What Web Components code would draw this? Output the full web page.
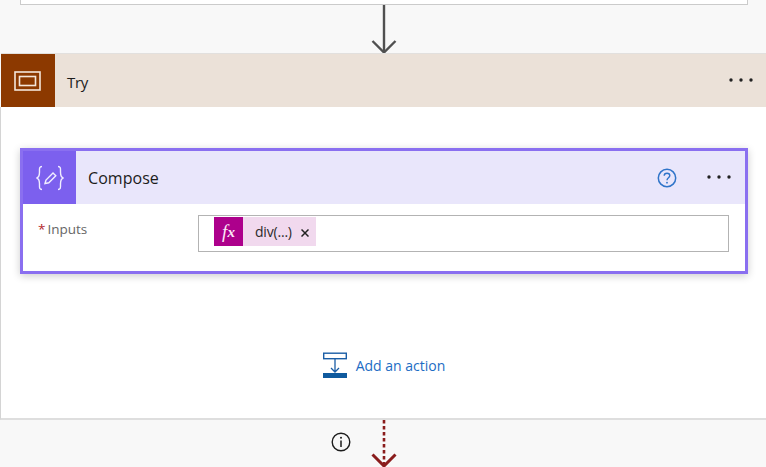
<!DOCTYPE html>
<html>
<head>
<meta charset="utf-8">
<title>Try scope</title>
<style>
    html, body {
        margin: 0;
        height: 467px;
        overflow: hidden;
        background: #f8f8f8;
        font-family: "Open Sans", "Noto Sans", "Liberation Sans", sans-serif;
    }
</style>
</head>
<body>
<flow-canvas>
    <prev-card></prev-card>
    <flow-arrow></flow-arrow>
    <scope-block label="Try">
        <action-card label="Compose">
            <input-row label="Inputs">
                <token-chip label="div(...)"></token-chip>
            </input-row>
        </action-card>
        <add-action label="Add an action"></add-action>
    </scope-block>
    <flow-footer></flow-footer>
</flow-canvas>

<script>
// three dots used in both headers
const DOTS = `<svg width="26" height="6" viewBox="0 0 26 6"><circle cx="3" cy="3" r="1.7" fill="#222"/><circle cx="13" cy="3" r="1.7" fill="#222"/><circle cx="23" cy="3" r="1.7" fill="#222"/></svg>`;

class FlowCanvas extends HTMLElement {
    constructor() {
        super();
        this.attachShadow({ mode: 'open' });
        this.shadowRoot.innerHTML = `
            <style>
                :host { display: flex; flex-direction: column; width: 766px; height: 467px; overflow: hidden; }
            </style>
            <slot></slot>
        `;
    }
}

class PrevCard extends HTMLElement {
    constructor() {
        super();
        this.attachShadow({ mode: 'open' });
        this.shadowRoot.innerHTML = `
            <style>
                :host {
                    display: block;
                    height: 4px;
                    margin: 0 18px 0 20px;
                    background: #fff;
                    border: 1px solid #cbcbcb;
                    border-top: 0;
                }
            </style>
        `;
    }
}

class FlowArrow extends HTMLElement {
    constructor() {
        super();
        this.attachShadow({ mode: 'open' });
        this.shadowRoot.innerHTML = `
            <style>
                :host { display: flex; justify-content: center; height: 48px; padding-left: 2px; }
                svg { display: block; }
            </style>
            <svg width="26" height="48" viewBox="0 0 26 48" fill="none" stroke="#505050" stroke-width="2.400">
                <path d="M13 0V47"/>
                <path d="M1.500 36L13 47.500L24.500 36"/>
            </svg>
        `;
    }
}

class ScopeBlock extends HTMLElement {
    constructor() {
        super();
        this.attachShadow({ mode: 'open' });
        this.shadowRoot.innerHTML = `
            <style>
                :host { display: block; }
                #head {
                    display: flex;
                    align-items: center;
                    height: 53px;
                    margin-left: 1px;
                    background: #ebe1d8;
                    border-top: 1px solid #e2e0de;
                    color: #1c1c1c;
                }
                #icon {
                    display: flex;
                    align-items: center;
                    justify-content: center;
                    width: 54px;
                    height: 53px;
                    background: #8c3900;
                }
                #title { flex: 1; margin-left: 12px; margin-top: 2px; font-size: 15px; letter-spacing: -0.3px; }
                #more { display: flex; margin-right: 12px; margin-top: -2px; }
                #body {
                    height: 313px;
                    box-sizing: border-box;
                    background: #fff;
                    border-left: 1px solid #d4d4d4;
                    border-bottom: 2px solid #dedede;
                    display: flex;
                    flex-direction: column;
                    padding: 41px 18px 0 19px;
                }
            </style>
            <div id="head">
                <div id="icon">
                    <svg width="28" height="20" viewBox="0 0 28 20" fill="none" stroke="#f4e6da" stroke-width="1.600">
                        <rect x="1" y="1" width="25" height="18"/>
                        <rect x="5.500" y="5.500" width="16" height="9"/>
                    </svg>
                </div>
                <div id="title"></div>
                <div id="more">${DOTS}</div>
            </div>
            <div id="body"><slot></slot></div>
        `;
        this.shadowRoot.getElementById('title').textContent = this.getAttribute('label');
    }
}

class ActionCard extends HTMLElement {
    constructor() {
        super();
        this.attachShadow({ mode: 'open' });
        this.shadowRoot.innerHTML = `
            <style>
                :host {
                    display: block;
                    height: 126px;
                    box-sizing: border-box;
                    border: 3px solid #8a6ff0;
                    background: #fff;
                    box-shadow: 0 2px 8px rgba(0, 0, 0, 0.2);
                }
                #head {
                    display: flex;
                    align-items: center;
                    height: 53px;
                    background: #e9e6fb;
                    color: #1c1c1c;
                }
                #icon {
                    display: flex;
                    align-items: center;
                    justify-content: center;
                    width: 53px;
                    height: 53px;
                    background: #7c60ee;
                }
                #title { flex: 1; margin-left: 12px; font-size: 16px; letter-spacing: 0.05px; }
                #help { display: block; margin-right: 29px; }
                #more { display: flex; margin-right: 13px; margin-top: -2px; }
            </style>
            <div id="head">
                <div id="icon">
                    <svg width="30" height="26" viewBox="0 0 30 26" fill="none" stroke="#f1eeff" stroke-width="1.400">
                        <path d="M7 1.500C4 1.500 4.500 4 4.500 7C4.500 10.500 4 12.500 1.500 13C4 13.500 4.500 15.500 4.500 19C4.500 22 4 24.500 7 24.500"/>
                        <path d="M23 1.500C26 1.500 25.500 4 25.500 7C25.500 10.500 26 12.500 28.500 13C26 13.500 25.500 15.500 25.500 19C25.500 22 26 24.500 23 24.500"/>
                        <path d="M10 18.500L11 15L18 8L20.800 10.800L13.800 17.800Z"/>
                    </svg>
                </div>
                <div id="title"></div>
                <svg id="help" width="20" height="20" viewBox="0 0 20 20" fill="none">
                    <circle cx="10" cy="10" r="8.700" stroke="#2f74c9" stroke-width="1.500"/>
                    <path d="M7.200 7.800C7.200 6.200 8.400 5.200 10 5.200C11.600 5.200 12.800 6.200 12.800 7.600C12.800 9.800 10 9.800 10 12.300" stroke="#2f74c9" stroke-width="1.400"/>
                    <circle cx="10" cy="14.700" r="0.900" fill="#2f74c9"/>
                </svg>
                <div id="more">${DOTS}</div>
            </div>
            <slot></slot>
        `;
        this.shadowRoot.getElementById('title').textContent = this.getAttribute('label');
    }
}

class InputRow extends HTMLElement {
    constructor() {
        super();
        this.attachShadow({ mode: 'open' });
        this.shadowRoot.innerHTML = `
            <style>
                :host { display: flex; align-items: flex-start; padding: 11px 16px 0 15px; }
                #label { width: 160px; font-size: 13.500px; color: #666; line-height: 30px; margin-top: -1px; }
                #star { color: #b3262c; margin-right: 2px; }
                #box {
                    flex: 1;
                    height: 37px;
                    box-sizing: border-box;
                    display: flex;
                    align-items: flex-start;
                    padding: 1px 0 0 15px;
                    border: 1px solid #b3b3b3;
                }
            </style>
            <div id="label"><span id="star">*</span><span id="text"></span></div>
            <div id="box"><slot></slot></div>
        `;
        this.shadowRoot.getElementById('text').textContent = this.getAttribute('label');
    }
}

class TokenChip extends HTMLElement {
    constructor() {
        super();
        this.attachShadow({ mode: 'open' });
        this.shadowRoot.innerHTML = `
            <style>
                :host {
                    display: flex;
                    align-items: center;
                    height: 29px;
                    background: #f1d9ee;
                    color: #2b2b2b;
                    font-size: 14px;
                }
                #fx {
                    display: flex;
                    align-items: center;
                    justify-content: center;
                    width: 29px;
                    height: 29px;
                    background: #ad008c;
                    color: #fbe6f6;
                    font: italic 19px "Liberation Serif", serif;
                }
                #fx b { font-size: 15px; margin-top: 2px; }
                #text { margin-left: 12px; letter-spacing: -0.2px; }
                svg { display: block; margin: 3px 7px 0 9px; }
            </style>
            <div id="fx">f<b>x</b></div>
            <span id="text"></span>
            <svg width="8" height="8" viewBox="0 0 8 8" stroke="#222" stroke-width="1.500"><path d="M0.500 0.500L7.500 7.500M7.500 0.500L0.500 7.500"/></svg>
        `;
        this.shadowRoot.getElementById('text').textContent = this.getAttribute('label');
    }
}

class AddAction extends HTMLElement {
    constructor() {
        super();
        this.attachShadow({ mode: 'open' });
        this.shadowRoot.innerHTML = `
            <style>
                :host {
                    display: flex;
                    align-items: center;
                    justify-content: center;
                    gap: 9px;
                    margin-top: 77px;
                    height: 28px;
                    color: #1c6cc4;
                    font-size: 14px;
                }
                svg { display: block; }
            </style>
            <svg width="24" height="26" viewBox="0 0 24 26" fill="none">
                <rect x="0.700" y="1.200" width="22.600" height="5.500" stroke="#1b5ea6" stroke-width="1.400"/>
                <path d="M12 7V20M8 16L12 20L16 16" stroke="#1b5ea6" stroke-width="1.300"/>
                <rect x="0" y="21" width="24" height="5" fill="#0f5a9e"/>
            </svg>
            <span id="text"></span>
        `;
        this.shadowRoot.getElementById('text').textContent = this.getAttribute('label');
    }
}

class FlowFooter extends HTMLElement {
    constructor() {
        super();
        this.attachShadow({ mode: 'open' });
        this.shadowRoot.innerHTML = `
            <style>
                :host { display: flex; justify-content: center; align-items: flex-start; gap: 20px; padding-right: 38px; height: 47px; }
                svg { display: block; }
                #info { margin-top: 12px; }
            </style>
            <svg id="info" width="20" height="20" viewBox="0 0 20 20" fill="none">
                <circle cx="10" cy="10" r="8.800" stroke="#1c1c1c" stroke-width="1.400"/>
                <path d="M10 8.500V15" stroke="#1c1c1c" stroke-width="1.500"/>
                <circle cx="10" cy="5.800" r="1" fill="#1c1c1c"/>
            </svg>
            <svg width="26" height="47" viewBox="0 0 26 47" fill="none" stroke="#8a1c1c" stroke-width="2.600">
                <path d="M13 0V44" stroke-dasharray="3.500 2.500"/>
                <path d="M1.500 34.500L13 46L24.500 34.500" stroke-width="3"/>
            </svg>
        `;
    }
}

customElements.define('flow-canvas', FlowCanvas);
customElements.define('prev-card', PrevCard);
customElements.define('flow-arrow', FlowArrow);
customElements.define('scope-block', ScopeBlock);
customElements.define('action-card', ActionCard);
customElements.define('input-row', InputRow);
customElements.define('token-chip', TokenChip);
customElements.define('add-action', AddAction);
customElements.define('flow-footer', FlowFooter);
</script>
</body>
</html>
